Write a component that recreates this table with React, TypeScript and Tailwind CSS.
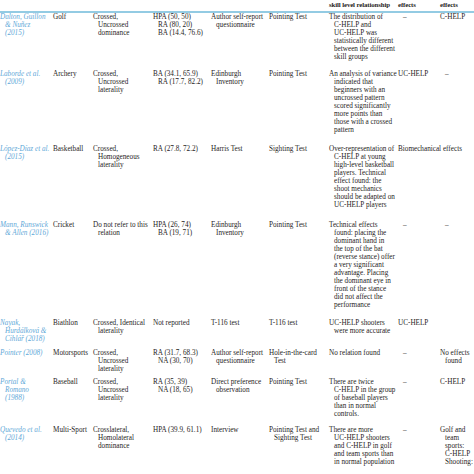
type Row = { h: string; cells: string[][] };

const head: string[][] = [
  [],
  [],
  [],
  [],
  [],
  [],
  ["skill level relationship"],
  ["effects"],
  ["effects"],
];

const rows: Row[] = [
  {
    h: "h-[58px]",
    cells: [
      ["Dalton, Guillon", "& Nuñez", "(2015)"],
      ["Golf"],
      ["Crossed,", "Uncrossed", "dominance"],
      ["HPA (50, 50)", "RA (80, 20)", "BA (14.4, 76.6)"],
      ["Author self-report", "questionnaire"],
      ["Pointing Test"],
      ["The distribution of", "C-HELP and", "UC-HELP was", "statistically different", "between the different", "skill groups"],
      ["–"],
      ["C-HELP"],
    ],
  },
  {
    h: "h-[75px]",
    cells: [
      ["Laborde et al.", "(2009)"],
      ["Archery"],
      ["Crossed,", "Uncrossed", "laterality"],
      ["BA (34.1, 65.9)", "RA (17.7, 82.2)"],
      ["Edinburgh", "Inventory"],
      ["Pointing Test"],
      ["An analysis of variance", "indicated that", "beginners with an", "uncrossed pattern", "scored significantly", "more points than", "those with a crossed", "pattern"],
      ["UC-HELP"],
      ["–"],
    ],
  },
  {
    h: "h-[76px]",
    cells: [
      ["López-Díaz et al.", "(2015)"],
      ["Basketball"],
      ["Crossed,", "Homogeneous", "laterality"],
      ["RA (27.8, 72.2)"],
      ["Harris Test"],
      ["Sighting Test"],
      ["Over-representation of", "C-HELP at young", "high-level basketball", "players. Technical", "effect found: the", "shoot mechanics", "should be adapted on", "UC-HELP players"],
      ["Biomechanical effects"],
      [],
    ],
  },
  {
    h: "h-[98px]",
    cells: [
      ["Mann, Runswick", "& Allen (2016)"],
      ["Cricket"],
      ["Do not refer to this", "relation"],
      ["HPA (26, 74)", "BA (19, 71)"],
      ["Edinburgh", "Inventory"],
      ["Pointing Test"],
      ["Technical effects", "found: placing the", "dominant hand in", "the top of the bat", "(reverse stance) offer", "a very significant", "advantage. Placing", "the dominant eye in", "front of the stance", "did not affect the", "performance"],
      ["–"],
      ["–"],
    ],
  },
  {
    h: "h-[30px]",
    cells: [
      ["Nayak,", "Hurdálková &", "Cihlář (2018)"],
      ["Biathlon"],
      ["Crossed, Identical", "laterality"],
      ["Not reported"],
      ["T-116 test"],
      ["T-116 test"],
      ["UC-HELP shooters", "were more accurate"],
      ["UC-HELP"],
      [],
    ],
  },
  {
    h: "h-[29px]",
    cells: [
      ["Pointer (2008)"],
      ["Motorsports"],
      ["Crossed,", "Uncrossed", "laterality"],
      ["RA (31.7, 68.3)", "NA (30, 70)"],
      ["Author self-report", "questionnaire"],
      ["Hole-in-the-card", "Test"],
      ["No relation found"],
      ["–"],
      ["No effects", "found"],
    ],
  },
  {
    h: "h-[48px]",
    cells: [
      ["Portal &", "Romano", "(1988)"],
      ["Baseball"],
      ["Crossed,", "Uncrossed", "laterality"],
      ["RA (35, 39)", "NA (18, 65)"],
      ["Direct preference", "observation"],
      ["Pointing Test"],
      ["There are twice", "C-HELP in the group", "of baseball players", "than in normal", "controls."],
      ["–"],
      ["C-HELP"],
    ],
  },
  {
    h: "h-[60px]",
    cells: [
      ["Quevedo et al.", "(2014)"],
      ["Multi-Sport"],
      ["Crosslateral,", "Homolateral", "dominance"],
      ["HPA (39.9, 61.1)"],
      ["Interview"],
      ["Pointing Test and", "Sighting Test"],
      ["There are more", "UC-HELP shooters", "and C-HELP in golf", "and team sports than", "in normal population"],
      ["–"],
      ["Golf and", "team", "sports:", "C-HELP", "Shooting:"],
    ],
  },
];

function Lines({ lines, dash }: { lines: string[]; dash?: boolean }) {
  return (
    <>
      {lines.map((l, i) => (
        <div
          key={i}
          className={`h-[8px] whitespace-nowrap leading-[8px] ${i > 0 ? "pl-[5px]" : ""} ${dash && l === "–" ? "pl-[5px]" : ""}`}
        >
          {l}
        </div>
      ))}
    </>
  );
}

export default function App() {
  return (
    <div
      className="h-[474px] w-[474px] overflow-hidden bg-white text-[7.2px] text-[#1f1d1c]"
      style={{ fontFamily: '"Liberation Serif", "Times New Roman", serif' }}
    >
      <table className="w-[480px] table-fixed border-collapse">
        <colgroup>
          <col className="w-[53px]" />
          <col className="w-[40px]" />
          <col className="w-[60px]" />
          <col className="w-[58px]" />
          <col className="w-[58px]" />
          <col className="w-[60px]" />
          <col className="w-[69px]" />
          <col className="w-[42px]" />
          <col className="w-[40px]" />
        </colgroup>
        <thead>
          <tr>
            {head.map((c, i) => (
              <th
                key={i}
                className="border-b-2 border-[#93cbe3] p-0 pb-[2px] pt-px text-left align-top text-[6.8px] font-bold tracking-[-0.1px]"
              >
                <Lines lines={c} />
              </th>
            ))}
          </tr>
        </thead>
        <tbody>
          {rows.map((r, ri) => (
            <tr key={ri} className={r.h}>
              {r.cells.map((c, ci) => (
                <td
                  key={ci}
                  className={`overflow-visible p-0 align-top ${ci === 0 ? "italic text-[#5fa9d8]" : ""}`}
                >
                  <Lines lines={c} dash={ci >= 7} />
                </td>
              ))}
            </tr>
          ))}
        </tbody>
      </table>
    </div>
  );
}
